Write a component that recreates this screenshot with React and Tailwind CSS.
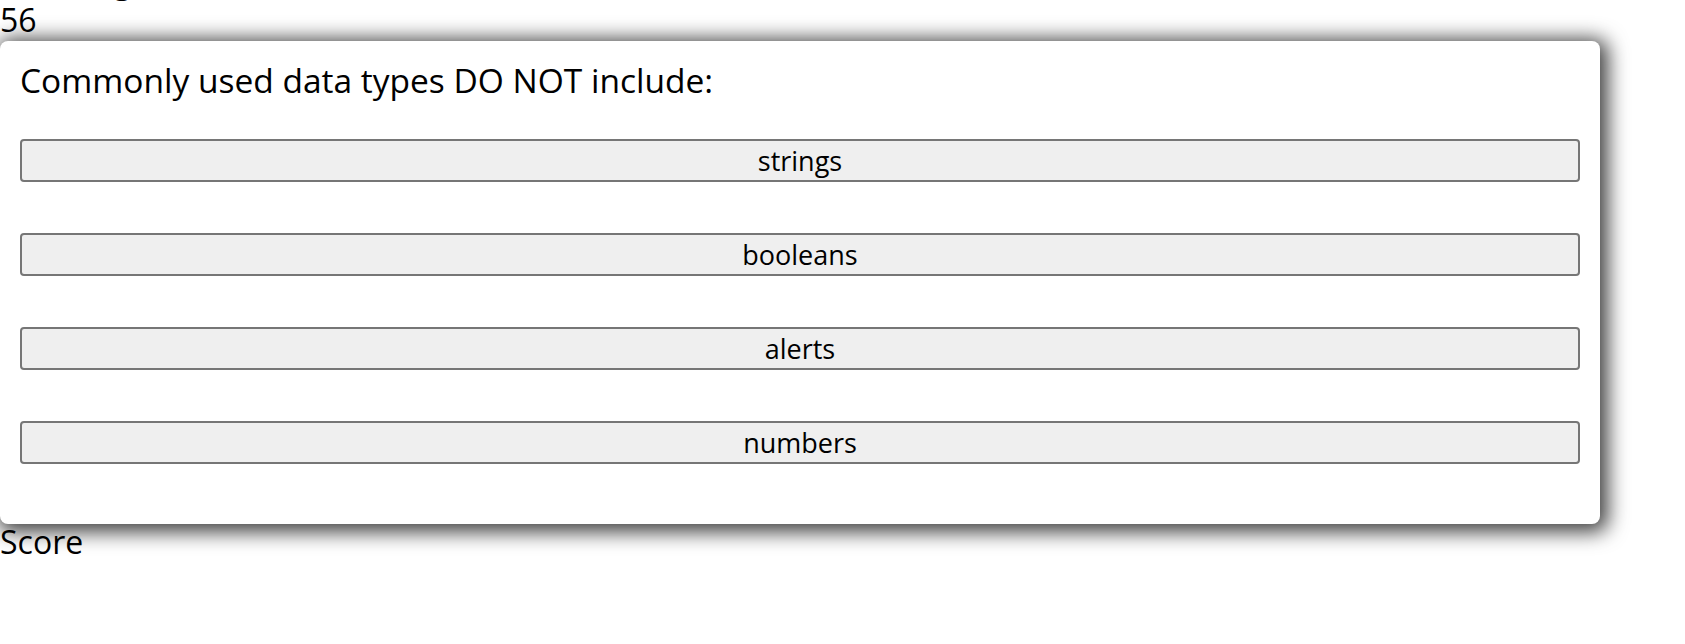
import React from "react";

const answers = ["strings", "booleans", "alerts", "numbers"];

function App() {
  return (
    <div className="min-h-screen bg-white text-black font-['Open_Sans',sans-serif]">
      {/* page is scrolled a little, only the tail of the first line shows */}
      <div className="-mt-[35px]">
        <div className="text-[31px] leading-[34px]">Counting</div>
        <div className="text-[32px] leading-[42px]">56</div>

        <div className="w-[1600px] rounded-lg bg-white px-5 pt-[19px] pb-[60px] shadow-[3px_3px_20px_5px_rgba(0,0,0,0.75)]">
          <p className="text-[33.5px] leading-[40px]">
            Commonly used data types DO NOT include:
          </p>

          <div className="mt-[39px] flex flex-col gap-[51px]">
            {answers.map((answer) => (
              <button
                key={answer}
                className="h-[43px] w-full rounded-[4px] border-2 border-[#767676] bg-[#efefef] text-[27px] leading-none text-black"
              >
                {answer}
              </button>
            ))}
          </div>
        </div>

        <div className="text-[32px] leading-[36px]">Score</div>
      </div>
    </div>
  );
}

export default App;
